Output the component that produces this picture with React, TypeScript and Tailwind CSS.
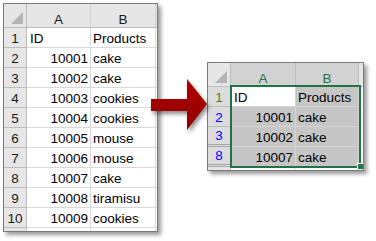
import React from 'react'

type Row = { n: string; id: string; product: string }

const allRows: Row[] = [
  { n: '1', id: 'ID', product: 'Products' },
  { n: '2', id: '10001', product: 'cake' },
  { n: '3', id: '10002', product: 'cake' },
  { n: '4', id: '10003', product: 'cookies' },
  { n: '5', id: '10004', product: 'cookies' },
  { n: '6', id: '10005', product: 'mouse' },
  { n: '7', id: '10006', product: 'mouse' },
  { n: '8', id: '10007', product: 'cake' },
  { n: '9', id: '10008', product: 'tiramisu' },
  { n: '10', id: '10009', product: 'cookies' },
]

const filteredRows = allRows.filter((r) => ['1', '2', '3', '8'].includes(r.n))

function Corner() {
  return (
    <svg width="12" height="12" viewBox="0 0 12 12" className="absolute right-[3px] bottom-[3px]">
      <polygon points="12,0 12,12 0,12" fill="#b4b4b4" />
    </svg>
  )
}

function SourceSheet() {
  return (
    <div className="flex h-[229px] w-[155px] shrink-0 flex-col overflow-hidden border border-[#7a7a7a] bg-white shadow-[3px_3px_4px_rgba(0,0,0,0.4)]">
      <div className="flex h-[24px] shrink-0 border-b border-[#bdbdbd] bg-[#e6e6e6] text-[#1a1a1a]">
        <div className="relative w-[23px] shrink-0 border-r border-[#bdbdbd]">
          <Corner />
        </div>
        <div className="flex w-[64px] shrink-0 items-end justify-center border-r border-[#d0d0d0] leading-[15px]">A</div>
        <div className="flex w-[65px] shrink-0 items-end justify-center border-r border-[#d0d0d0] leading-[15px]">B</div>
        <div className="flex-1" />
      </div>
      {allRows.map((r) => (
        <div key={r.n} className="flex h-[20px] shrink-0">
          <div className="flex w-[23px] shrink-0 items-end justify-center border-r border-b border-[#bdbdbd] bg-[#e6e6e6] pb-[1px] leading-[15px] text-[#1a1a1a]">
            {r.n}
          </div>
          <div
            className={`flex w-[64px] shrink-0 items-end border-r border-b border-[#d9d9d9] pb-[1px] leading-[15px] ${
              r.n === '1' ? 'justify-start pl-[3px]' : 'justify-end pr-[2px]'
            }`}
          >
            {r.id}
          </div>
          <div className="flex w-[65px] shrink-0 items-end border-r border-b border-[#d9d9d9] pb-[1px] pl-[2px] leading-[15px]">
            {r.product}
          </div>
          <div className="flex-1 border-b border-[#d9d9d9]" />
        </div>
      ))}
      <div className="flex flex-1">
        <div className="w-[23px] shrink-0 border-r border-[#bdbdbd] bg-[#e6e6e6]" />
        <div className="w-[64px] shrink-0 border-r border-[#d9d9d9]" />
        <div className="w-[65px] shrink-0 border-r border-[#d9d9d9]" />
      </div>
    </div>
  )
}

function FilteredSheet() {
  return (
    <div className="relative flex h-[109px] w-[157px] shrink-0 flex-col overflow-hidden border border-[#7a7a7a] bg-white shadow-[3px_3px_4px_rgba(0,0,0,0.4)]">
      <div className="flex h-[24px] shrink-0 border-b border-[#bdbdbd] bg-[#e6e6e6]">
        <div className="relative w-[23px] shrink-0 border-r border-[#bdbdbd]">
          <Corner />
        </div>
        <div className="flex w-[65px] shrink-0 items-end justify-center border-r border-[#bdbdbd] bg-[#d2d2d2] leading-[15px] text-[#217346]">
          A
        </div>
        <div className="flex w-[63px] shrink-0 items-end justify-center border-r border-[#bdbdbd] bg-[#d2d2d2] leading-[15px] text-[#217346]">
          B
        </div>
        <div className="flex-1" />
      </div>
      {filteredRows.map((r) => {
        const head = r.n === '1'
        const hiddenBelow = r.n === '3' || r.n === '8'
        return (
          <div key={r.n} className="flex h-[20px] shrink-0">
            <div
              className={`flex w-[23px] shrink-0 items-end justify-center border-r border-[#bdbdbd] bg-[#dcdcdc] pb-[1px] leading-[15px] ${
                hiddenBelow ? 'border-b-[3px] border-b-[#a6a6a6] [border-bottom-style:double]' : 'border-b'
              } ${head ? 'text-[#5d7a23]' : 'text-[#0000ff]'}`}
            >
              {r.n}
            </div>
            <div
              className={`flex w-[65px] shrink-0 items-end border-r border-b border-[#d4d4d4] pb-[1px] leading-[15px] ${
                head ? 'justify-start bg-white pl-[3px]' : 'justify-end bg-[#c6c6c6] pr-[2px]'
              }`}
            >
              {r.id}
            </div>
            <div className="flex w-[63px] shrink-0 items-end border-r border-b border-[#d4d4d4] bg-[#c6c6c6] pb-[1px] pl-[2px] leading-[15px]">
              {r.product}
            </div>
            <div className="flex-1 border-b border-[#d9d9d9]" />
          </div>
        )
      })}
      <div className="flex flex-1">
        <div className="w-[23px] shrink-0 border-r border-[#bdbdbd] bg-[#e6e6e6]" />
        <div className="w-[65px] shrink-0 border-r border-[#d9d9d9]" />
        <div className="w-[63px] shrink-0 border-r border-[#d9d9d9]" />
      </div>

      {/* selection frame with fill handle */}
      <div className="pointer-events-none absolute top-[22px] left-[22px] h-[83px] w-[131px] border-2 border-[#217346]" />
      <div className="absolute top-[100px] left-[149px] h-[7px] w-[7px] border border-white bg-[#217346]" />
    </div>
  )
}

function Arrow() {
  return (
    <svg
      width="62"
      height="58"
      viewBox="0 0 62 58"
      className="absolute top-[79px] left-[151px] drop-shadow-[2px_3px_2px_rgba(0,0,0,0.45)]"
    >
      <defs>
        <linearGradient id="arrowFill" x1="0" y1="0" x2="0" y2="1">
          <stop offset="0" stopColor="#b00000" />
          <stop offset="1" stopColor="#900000" />
        </linearGradient>
      </defs>
      <polygon points="0,20 36,20 36,0 56,25 36,51 36,32 0,32" fill="url(#arrowFill)" />
    </svg>
  )
}

export default function App() {
  return (
    <div className="relative flex h-[241px] w-[376px] items-start overflow-hidden bg-white font-['Liberation_Sans',Arial,sans-serif] text-[13.5px] text-black">
      <div className="mt-[3px] ml-[3px]">
        <SourceSheet />
      </div>
      <div className="mt-[62px] ml-[49px]">
        <FilteredSheet />
      </div>
      <Arrow />
    </div>
  )
}
